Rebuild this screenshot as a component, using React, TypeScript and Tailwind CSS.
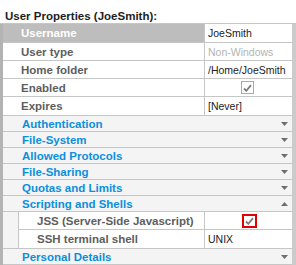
import React from "react";

const Down = () => (
  <svg width="7" height="4" viewBox="0 0 7 4" className="block">
    <polygon points="0,0 7,0 3.5,4" fill="#6e6e6e" />
  </svg>
);
const Up = () => (
  <svg width="7" height="4" viewBox="0 0 7 4" className="block">
    <polygon points="0,4 7,4 3.5,0" fill="#6e6e6e" />
  </svg>
);

const Check = ({ color }: { color: string }) => (
  <svg width="9" height="8" viewBox="0 0 9 8" className="block">
    <path d="M1 4.5 L3.3 6.8 L8 1.2" stroke={color} strokeWidth="1.8" fill="none" />
  </svg>
);

function PropRow({
  label,
  h,
  children,
  selected,
}: {
  label: string;
  h: string;
  children?: React.ReactNode;
  selected?: boolean;
}) {
  return (
    <div className={`flex ${h} border-b border-[#c6c6c6]`}>
      <div
        className={`w-[202px] shrink-0 border-r border-[#c6c6c6] pl-[18px] flex items-center font-bold text-[11.5px] ${
          selected ? "bg-[#bdbdbd] text-white" : "bg-white text-[#5e5e5e]"
        }`}
      >
        {label}
      </div>
      <div className="flex-1 bg-white flex items-center pl-[3px] text-[10.5px] text-[#222]">{children}</div>
    </div>
  );
}

function Group({ label, up }: { label: string; up?: boolean }) {
  return (
    <div className="flex h-[16px] border-b border-[#c6c6c6] bg-[#f4f4f4] items-center pl-[19px] pr-[4px]">
      <div className="flex-1 font-bold text-[11.5px] text-[#0b8fdd]">{label}</div>
      {up ? <Up /> : <Down />}
    </div>
  );
}

export default function App() {
  return (
    <div className="w-[296px] h-[265px] bg-white overflow-hidden font-['Liberation_Sans',Arial,sans-serif] leading-[14px]">
      <div className="h-[24px] border-b border-[#c6c6c6] pl-[5px] pt-[9px] text-[11.5px] font-bold text-[#1e1e1e]">
        User Properties (JoeSmith):
      </div>
      <div className="flex h-[241px]">
        <div className="w-[3px] shrink-0 bg-[#b3b3b3]" />
        <div className="flex-1 flex flex-col min-w-0">
          <PropRow label="Username" h="h-[19px]" selected>
            JoeSmith
          </PropRow>
          <PropRow label="User type" h="h-[18px]">
            <span className="text-[#b4b4b4]">Non-Windows</span>
          </PropRow>
          <PropRow label="Home folder" h="h-[18px]">
            /Home/JoeSmith
          </PropRow>
          <PropRow label="Enabled" h="h-[18px]">
            <div className="flex-1 flex justify-center pr-[6px]">
              <div className="w-[13px] h-[13px] border border-[#a9a9a9] bg-white flex items-center justify-center">
                <Check color="#7c7c7c" />
              </div>
            </div>
          </PropRow>
          <PropRow label="Expires" h="h-[19px]">
            [Never]
          </PropRow>
          <Group label="Authentication" />
          <Group label="File-System" />
          <Group label="Allowed Protocols" />
          <Group label="File-Sharing" />
          <Group label="Quotas and Limits" />
          <Group label="Scripting and Shells" up />
          <div className="flex border-b border-[#c6c6c6]">
            <div className="w-[15px] shrink-0 bg-[#f4f4f4]" />
            <div className="flex-1 flex flex-col border-l border-[#c6c6c6] min-w-0">
              <div className="flex h-[18px] border-b border-[#c6c6c6]">
                <div className="w-[186px] shrink-0 border-r border-[#c6c6c6] pl-[18px] flex items-center font-bold text-[11.5px] text-[#5e5e5e] bg-white">
                  JSS (Server-Side Javascript)
                </div>
                <div className="flex-1 bg-white flex items-center justify-center pl-[2px]">
                  <div className="w-[15px] h-[14px] border-2 border-[#e60000] bg-white flex items-center justify-center">
                    <Check color="#7c7c7c" />
                  </div>
                </div>
              </div>
              <div className="flex h-[18px]">
                <div className="w-[186px] shrink-0 border-r border-[#c6c6c6] pl-[18px] flex items-center font-bold text-[11.5px] text-[#5e5e5e] bg-white">
                  SSH terminal shell
                </div>
                <div className="flex-1 bg-white flex items-center pl-[3px] text-[10.5px] text-[#222]">UNIX</div>
              </div>
            </div>
          </div>
          <Group label="Personal Details" />
        </div>
        <div className="w-[4px] shrink-0 bg-[#cbcbcb]" />
      </div>
    </div>
  );
}
